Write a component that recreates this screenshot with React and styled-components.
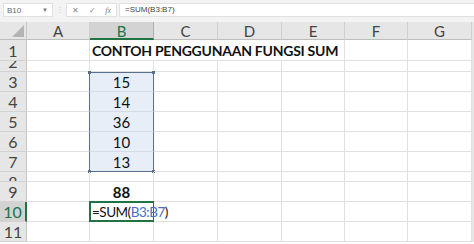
import styled, { createGlobalStyle } from 'styled-components'

const Global = createGlobalStyle`
  html, body { margin: 0; padding: 0; background: #ffffff; }
  body { font-family: "Lato", "Open Sans", sans-serif; overflow: hidden; }
`;

const Page = styled.div`
  width: 474px;
  height: 244px;
  overflow: hidden;
  background: #f3f3f3;
`;

const Toolbar = styled.div`
  height: 22px;
  display: flex;
  align-items: flex-start;
  padding-top: 3px;
  box-sizing: border-box;
  background: #f3f3f3;
  font-family: "Liberation Sans", sans-serif;
  font-size: 8px;
  color: #555;
`;

const NameBox = styled.div`
  width: 50px;
  height: 14px;
  margin-left: 3px;
  background: #fff;
  border: 1px solid #e2e2e2;
  box-sizing: border-box;
  display: flex;
  align-items: center;
  justify-content: space-between;
  padding: 0 4px 0 3px;
  color: #666;
`;

const Arrow = styled.span`
  font-size: 6px;
  color: #777;
`;

const Grip = styled.div`
  width: 13px;
  display: flex;
  justify-content: center;
  color: #c8c8c8;
  font-size: 8px;
  line-height: 14px;
`;

const Buttons = styled.div`
  width: 51px;
  height: 14px;
  background: #fff;
  border: 1px solid #e2e2e2;
  box-sizing: border-box;
  display: flex;
  align-items: center;
  justify-content: space-around;
  color: #888;
`;

const Fx = styled.span`
  font-family: "Liberation Serif", serif;
  font-style: italic;
  font-size: 8px;
  color: #777;
`;

const FormulaInput = styled.div`
  flex: 1;
  height: 14px;
  margin-left: 2px;
  background: #fff;
  border-top: 1px solid #e2e2e2;
  border-bottom: 1px solid #e2e2e2;
  border-left: 1px solid #e2e2e2;
  box-sizing: border-box;
  padding-left: 5px;
  line-height: 12px;
  color: #444;
`;

const Sheet = styled.div`
  display: grid;
  grid-template-columns: 27px 63px 64px 64px 64px 63px 63px 64px 2px;
  grid-template-rows: 18px 21px 11px 20px 20px 20px 20px 20px 10px 20px 20px 20px 2px;
  background: #fff;
`;

const Corner = styled.div`
  background: #e6e6e6;
  border-right: 1px solid #c6c6c6;
  border-bottom: 1px solid #bdbdbd;
  box-sizing: border-box;
  display: flex;
  align-items: flex-end;
  justify-content: flex-end;
  padding: 0 2px 2px 0;
`;

const Triangle = styled.div`
  width: 0;
  height: 0;
  border-left: 12px solid transparent;
  border-bottom: 12px solid #b4b4b4;
`;

const ColHead = styled.div`
  background: ${p => (p.$active ? '#d3d3d3' : '#e6e6e6')};
  color: ${p => (p.$active ? '#217346' : '#444')};
  border-right: 1px solid ${p => (p.$active ? '#b0b0b0' : '#cfcfcf')};
  border-bottom: ${p => (p.$active ? '2px solid #217346' : '1px solid #bdbdbd')};
  box-sizing: border-box;
  display: flex;
  align-items: center;
  justify-content: center;
  font-size: 15px;
  padding-top: 1px;
`;

const RowHead = styled.div`
  background: ${p => (p.$active ? '#d3d3d3' : '#e6e6e6')};
  color: ${p => (p.$active ? '#217346' : '#444')};
  border-right: ${p => (p.$active ? '2px solid #217346' : '1px solid #c6c6c6')};
  border-bottom: 1px solid #d2d2d2;
  box-sizing: border-box;
  display: flex;
  align-items: ${p => p.$align || 'center'};
  justify-content: center;
  overflow: hidden;
  font-size: 16px;
  line-height: 19px;
`;

const Cell = styled.div`
  position: relative;
  border-right: 1px solid #e0e0e0;
  border-bottom: 1px solid #e0e0e0;
  box-sizing: border-box;
  display: flex;
  align-items: center;
  justify-content: ${p => (p.$center ? 'center' : 'flex-start')};
  font-size: 15px;
  color: #111;
  font-weight: ${p => (p.$bold ? 700 : 400)};
  white-space: nowrap;
  ${p => p.$span && `grid-column: span ${p.$span};`}
`;

const Title = styled.span`
  padding-left: 2px;
  font-size: 14px;
  font-weight: 700;
  letter-spacing: -0.25px;
  color: #111;
`;

const RangeCell = styled(Cell)`
  background: #e8eef8;
  border-left: 1px solid #5a6f8c;
  border-right: 1px solid #5a6f8c;
  border-top: ${p => (p.$first ? '1px solid #5a6f8c' : 'none')};
  border-bottom: 1px solid ${p => (p.$last ? '#5a6f8c' : '#d6dce6')};
  margin-left: -1px;
  &::before, &::after {
    content: '';
    position: absolute;
    width: 3px;
    height: 3px;
    background: #5a6f8c;
    display: ${p => (p.$first || p.$last ? 'block' : 'none')};
  }
  &::before { left: -2px; ${p => (p.$first ? 'top: -2px;' : 'bottom: -2px;')} }
  &::after { right: -2px; ${p => (p.$first ? 'top: -2px;' : 'bottom: -2px;')} }
`;

const EditCell = styled(Cell)`
  border: 2px solid #217346;
  border-right: 1px solid #217346;
  margin: -1px 0 0 -1px;
  overflow: visible;
  z-index: 2;
  font-size: 13.5px;
  letter-spacing: -0.5px;
  padding-left: 1px;
`;

const Ref = styled.span`
  color: #4472c4;
`;

const Caret = styled.span`
  display: inline-block;
  width: 1px;
  height: 16px;
  background: #111;
  margin-left: 2px;
`;

const Edge = styled.div`
  background: #e6e6e6;
`;

const cols = ['A', 'B', 'C', 'D', 'E', 'F', 'G'];
const values = { 3: 15, 4: 14, 5: 36, 6: 10, 7: 13 };

const RowCells = ({ row }) => {
  const cells = [];
  cols.forEach(c => {
    const key = c + row;
    if (row === 1 && c === 'B') {
      cells.push(<Cell key={key} $span={4}><Title>CONTOH PENGGUNAAN FUNGSI SUM</Title></Cell>);
      return;
    }
    if (row === 1 && (c === 'C' || c === 'D' || c === 'E')) return;
    if (c === 'B' && values[row] !== undefined) {
      cells.push(<RangeCell key={key} $center $first={row === 3} $last={row === 7}>{values[row]}</RangeCell>);
      return;
    }
    if (c === 'B' && row === 9) {
      cells.push(<Cell key={key} $center $bold>88</Cell>);
      return;
    }
    if (c === 'B' && row === 10) {
      cells.push(
        <EditCell key={key}>
          =SUM(<Ref>B3:B7</Ref>)<Caret />
        </EditCell>
      );
      return;
    }
    cells.push(<Cell key={key} />);
  });
  return cells;
};

const rows = [1, 2, 3, 4, 5, 6, 7, 8, 9, 10, 11];

const App = () => {
  return (
    <Page>
      <Global />
      <Toolbar>
        <NameBox>
          <span>B10</span>
          <Arrow>▼</Arrow>
        </NameBox>
        <Grip>⋮</Grip>
        <Buttons>
          <span>✕</span>
          <span>✓</span>
          <Fx>fx</Fx>
        </Buttons>
        <FormulaInput>=SUM(B3:B7)</FormulaInput>
      </Toolbar>
      <Sheet>
        <Corner><Triangle /></Corner>
        {cols.map(c => (
          <ColHead key={c} $active={c === 'B'}>{c}</ColHead>
        ))}
        <Edge />
        {rows.map(r => [
          <RowHead
            key={'h' + r}
            $active={r === 10}
            $align={r === 2 ? 'flex-end' : r === 8 ? 'flex-start' : 'center'}
          >
            {r}
          </RowHead>,
          ...RowCells({ row: r }),
          <Edge key={'e' + r} />,
        ])}
      </Sheet>
    </Page>
  )
}

export default App
